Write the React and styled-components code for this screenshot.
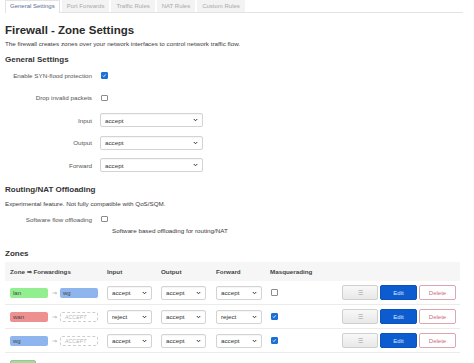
import React from 'react';
import styled, { createGlobalStyle } from 'styled-components';

const Global = createGlobalStyle`
  html, body { margin: 0; padding: 0; background: #fff; }
  body {
    font-family: "Liberation Sans", Arial, sans-serif;
    color: #404040;
    font-size: 6.25px;
    overflow: hidden;
  }
  * { box-sizing: border-box; }
`;

const Page = styled.div`
  width: 474px;
  padding: 0 11px 0 5px;
`;

const Tabs = styled.ul`
  display: flex;
  align-items: flex-end;
  gap: 2px;
  list-style: none;
  margin: 0;
  padding: 0;
  height: 13px;
  border-bottom: 1px solid #e3e3e3;
`;

const Tab = styled.li`
  line-height: 11px;
  padding: 0 4px;
  font-size: 6px;
  white-space: nowrap;
  background: ${p => (p.$active ? '#fff' : '#f3f3f3')};
  color: ${p => (p.$active ? '#5a6c9c' : '#a9a9a9')};
  border: 1px solid ${p => (p.$active ? '#e3e3e3' : '#f3f3f3')};
  border-bottom: none;
  margin-bottom: ${p => (p.$active ? '-1px' : '0')};
  height: ${p => (p.$active ? '13px' : '12px')};
`;

const Title = styled.h2`
  margin: 10px 0 0;
  font-size: 11.5px;
  line-height: 14px;
  font-weight: bold;
  color: #2a2a2a;
`;

const Desc = styled.p`
  margin: ${p => p.$mt ?? 3}px 0 0;
  line-height: 8px;
  color: #3a3a3a;
  padding-left: ${p => p.$indent || 0}px;
`;

const SectionTitle = styled.h3`
  margin: ${p => p.$mt}px 0 0;
  font-size: 8px;
  line-height: ${p => p.$lh || 10}px;
  font-weight: bold;
  color: #333;
`;

const FormRow = styled.div`
  display: flex;
  align-items: center;
  height: ${p => p.$h || 22.5}px;
  margin-top: ${p => p.$mt || 0}px;
`;

const Label = styled.div`
  width: 87px;
  margin-right: 8px;
  text-align: right;
  color: #555;
  white-space: nowrap;
`;

const Control = styled.div`
  display: flex;
  align-items: center;
`;

const CheckBox = styled.span`
  display: inline-flex;
  align-items: center;
  justify-content: center;
  width: 6.5px;
  height: 6.5px;
  margin-left: 1px;
  border-radius: 1px;
  border: 1px solid ${p => (p.$checked ? '#1c6fd4' : '#8c8c8c')};
  background: ${p => (p.$checked ? '#1c6fd4' : '#fff')};
`;

const Check = ({ checked }) => (
  <CheckBox $checked={checked}>
    {checked && (
      <svg width="5" height="5" viewBox="0 0 10 10">
        <path d="M2 5.2 L4.2 7.4 L8.2 2.6" fill="none" stroke="#fff" strokeWidth="1.8" />
      </svg>
    )}
  </CheckBox>
);

const SelectBox = styled.div`
  display: flex;
  align-items: center;
  justify-content: space-between;
  width: ${p => p.$w}px;
  height: 14px;
  padding: 0 4px;
  border: 1px solid #d3d3d3;
  border-radius: 2px;
  background: #fff;
  color: #333;
  box-shadow: inset 0 1px 1px rgba(0, 0, 0, 0.04);
`;

const Select = ({ value, w }) => (
  <SelectBox $w={w}>
    <span>{value}</span>
    <svg width="5" height="4" viewBox="0 0 10 8">
      <path d="M1.5 2 L5 5.5 L8.5 2" fill="none" stroke="#333" strokeWidth="2" />
    </svg>
  </SelectBox>
);

const Table = styled.div`
  width: 455px;
  margin-top: 3.5px;
`;

const TRow = styled.div`
  display: grid;
  grid-template-columns: 97px 54px 55px 54px 72px 1fr;
  align-items: center;
  height: ${p => (p.$head ? 19 : 24)}px;
  background: ${p => (p.$head ? '#f6f6f6' : 'transparent')};
  border-bottom: ${p => (p.$head ? 'none' : '1px solid #ebebeb')};
  font-weight: ${p => (p.$head ? 'bold' : 'normal')};
  color: ${p => (p.$head ? '#444' : 'inherit')};
`;

const Cell = styled.div`
  padding-left: 5px;
  display: flex;
  align-items: center;
  white-space: nowrap;
`;

const ZoneBadge = styled.span`
  display: inline-flex;
  align-items: center;
  width: 38px;
  height: 10px;
  padding-left: 3px;
  border-radius: 2px;
  background: ${p => p.$color};
  color: #444;
  font-size: 6px;
`;

const Placeholder = styled.span`
  display: inline-flex;
  align-items: center;
  width: 38px;
  height: 10px;
  padding-left: 4px;
  border: 1px dashed #cfcfcf;
  border-radius: 2px;
  color: #b5b5b5;
  font-size: 5px;
  font-style: italic;
  letter-spacing: 0.2px;
`;

const Arrow = styled.span`
  width: 12px;
  text-align: center;
  color: #9a9a9a;
  font-size: 6px;
`;

const Buttons = styled.div`
  display: flex;
  gap: 2px;
`;

const Btn = styled.button`
  width: ${p => p.$w || 37}px;
  height: 15px;
  padding: 0;
  border-radius: 2px;
  font-family: inherit;
  font-size: 6px;
  cursor: pointer;
  ${p =>
    p.$variant === 'edit'
      ? `background:#0d5ccf; border:1px solid #0b52ba; color:#dfe9fb;`
      : p.$variant === 'delete'
      ? `background:#fff; border:1px solid #dca6b0; color:#d06c86;`
      : p.$variant === 'add'
      ? `background:#a9d8a4; border:1px solid #94c98e; color:#fff;`
      : `background:linear-gradient(#f8f8f8,#e8e8e8); border:1px solid #cfcfcf; color:#999;`}
`;

const zones = [
  { name: 'lan', color: '#92ee90', fwd: { name: 'wg', color: '#8fb5ef' }, input: 'accept', output: 'accept', forward: 'accept', masq: false },
  { name: 'wan', color: '#ee9090', fwd: null, input: 'reject', output: 'accept', forward: 'reject', masq: true },
  { name: 'wg', color: '#8fb5ef', fwd: null, input: 'accept', output: 'accept', forward: 'accept', masq: true },
];

const AddRow = styled.div`
  padding-left: 5px;
  margin-top: 7px;
`;

export default function App() {
  return (
    <>
      <Global />
      <Page>
        <Tabs>
          <Tab $active>General Settings</Tab>
          <Tab>Port Forwards</Tab>
          <Tab>Traffic Rules</Tab>
          <Tab>NAT Rules</Tab>
          <Tab>Custom Rules</Tab>
        </Tabs>

        <Title>Firewall - Zone Settings</Title>
        <Desc>The firewall creates zones over your network interfaces to control network traffic flow.</Desc>

        <SectionTitle $mt={7} $lh={9}>General Settings</SectionTitle>
        <FormRow>
          <Label>Enable SYN-flood protection</Label>
          <Control><Check checked /></Control>
        </FormRow>
        <FormRow>
          <Label>Drop invalid packets</Label>
          <Control><Check /></Control>
        </FormRow>
        <FormRow>
          <Label>Input</Label>
          <Control><Select value="accept" w={103} /></Control>
        </FormRow>
        <FormRow>
          <Label>Output</Label>
          <Control><Select value="accept" w={103} /></Control>
        </FormRow>
        <FormRow>
          <Label>Forward</Label>
          <Control><Select value="accept" w={103} /></Control>
        </FormRow>

        <SectionTitle $mt={8.5}>Routing/NAT Offloading</SectionTitle>
        <Desc $mt={4.5}>Experimental feature. Not fully compatible with QoS/SQM.</Desc>
        <FormRow $h={16} $mt={3.5}>
          <Label>Software flow offloading</Label>
          <Control><Check /></Control>
        </FormRow>
        <Desc $mt={0} $indent={107}>Software based offloading for routing/NAT</Desc>

        <SectionTitle $mt={13.5}>Zones</SectionTitle>
        <Table>
          <TRow $head>
            <Cell>Zone ⇒ Forwardings</Cell>
            <Cell>Input</Cell>
            <Cell>Output</Cell>
            <Cell>Forward</Cell>
            <Cell>Masquerading</Cell>
            <Cell />
          </TRow>
          {zones.map(z => (
            <TRow key={z.name}>
              <Cell>
                <ZoneBadge $color={z.color}>{z.name}</ZoneBadge>
                <Arrow>⇒</Arrow>
                {z.fwd ? (
                  <ZoneBadge $color={z.fwd.color}>{z.fwd.name}</ZoneBadge>
                ) : (
                  <Placeholder>ACCEPT</Placeholder>
                )}
              </Cell>
              <Cell><Select value={z.input} w={45} /></Cell>
              <Cell><Select value={z.output} w={45} /></Cell>
              <Cell><Select value={z.forward} w={46} /></Cell>
              <Cell><Check checked={z.masq} /></Cell>
              <Cell>
                <Buttons>
                  <Btn $w={36}>☰</Btn>
                  <Btn $variant="edit">Edit</Btn>
                  <Btn $variant="delete">Delete</Btn>
                </Buttons>
              </Cell>
            </TRow>
          ))}
        </Table>
        <AddRow>
          <Btn $variant="add" $w={26} aria-label="Add" />
        </AddRow>
      </Page>
    </>
  );
}
